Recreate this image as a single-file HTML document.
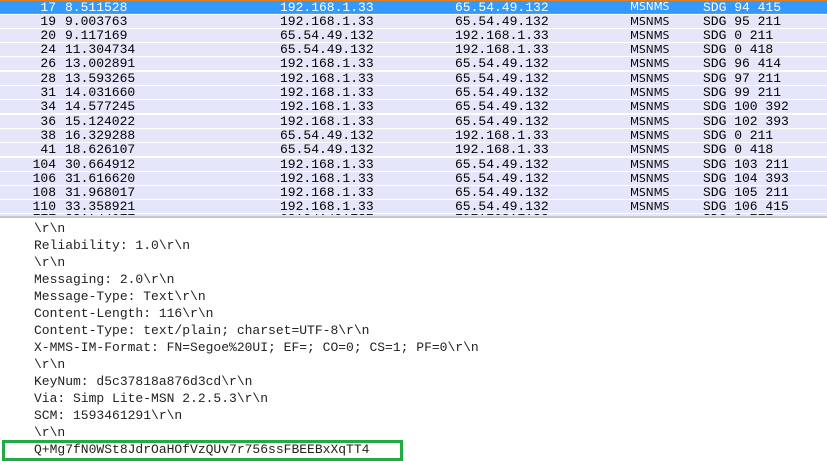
<!DOCTYPE html><html><head><style>
body{margin:0;width:827px;height:461px;overflow:hidden;background:#fff;position:relative;font-family:"Liberation Mono",monospace;font-size:13px;color:#000}
.r{position:absolute;left:0;width:827px;height:13px;background:#e6e6fa;border-bottom:1px solid #fff;line-height:14px;overflow:hidden}
.r span{position:absolute;top:0;white-space:pre}
.n{right:771px;text-align:right}
.t{left:65px}.s{left:280px}.d{left:455px}
.p{left:630px;font-family:"DejaVu Sans",sans-serif;font-size:10.5px}
.i{left:703px}
.sel{background:#3399ff;color:#fff;border-top:1px solid #e08020;border-bottom:1px solid #e08020;height:12px;line-height:13px}
.sep{position:absolute;left:0;top:216px;width:827px;height:2px;background:#c8c8c8}
.tx{position:absolute;left:34px;white-space:pre;color:#222;font-size:13px;line-height:17px}
.box{position:absolute;left:2px;top:440px;width:395px;height:15px;border:3px solid #22aa44}
</style></head><body>
<div class="r sel" style="top:0"><span class="n">17</span><span class="t">8.511528</span><span class="s">192.168.1.33</span><span class="d">65.54.49.132</span><span class="p">MSNMS</span><span class="i">SDG 94 415</span></div>
<div class="r" style="top:15px"><span class="n">19</span><span class="t">9.003763</span><span class="s">192.168.1.33</span><span class="d">65.54.49.132</span><span class="p">MSNMS</span><span class="i">SDG 95 211</span></div>
<div class="r" style="top:29px"><span class="n">20</span><span class="t">9.117169</span><span class="s">65.54.49.132</span><span class="d">192.168.1.33</span><span class="p">MSNMS</span><span class="i">SDG 0 211</span></div>
<div class="r" style="top:43px"><span class="n">24</span><span class="t">11.304734</span><span class="s">65.54.49.132</span><span class="d">192.168.1.33</span><span class="p">MSNMS</span><span class="i">SDG 0 418</span></div>
<div class="r" style="top:57px"><span class="n">26</span><span class="t">13.002891</span><span class="s">192.168.1.33</span><span class="d">65.54.49.132</span><span class="p">MSNMS</span><span class="i">SDG 96 414</span></div>
<div class="r" style="top:72px"><span class="n">28</span><span class="t">13.593265</span><span class="s">192.168.1.33</span><span class="d">65.54.49.132</span><span class="p">MSNMS</span><span class="i">SDG 97 211</span></div>
<div class="r" style="top:86px"><span class="n">31</span><span class="t">14.031660</span><span class="s">192.168.1.33</span><span class="d">65.54.49.132</span><span class="p">MSNMS</span><span class="i">SDG 99 211</span></div>
<div class="r" style="top:100px"><span class="n">34</span><span class="t">14.577245</span><span class="s">192.168.1.33</span><span class="d">65.54.49.132</span><span class="p">MSNMS</span><span class="i">SDG 100 392</span></div>
<div class="r" style="top:115px"><span class="n">36</span><span class="t">15.124022</span><span class="s">192.168.1.33</span><span class="d">65.54.49.132</span><span class="p">MSNMS</span><span class="i">SDG 102 393</span></div>
<div class="r" style="top:129px"><span class="n">38</span><span class="t">16.329288</span><span class="s">65.54.49.132</span><span class="d">192.168.1.33</span><span class="p">MSNMS</span><span class="i">SDG 0 211</span></div>
<div class="r" style="top:143px"><span class="n">41</span><span class="t">18.626107</span><span class="s">65.54.49.132</span><span class="d">192.168.1.33</span><span class="p">MSNMS</span><span class="i">SDG 0 418</span></div>
<div class="r" style="top:158px"><span class="n">104</span><span class="t">30.664912</span><span class="s">192.168.1.33</span><span class="d">65.54.49.132</span><span class="p">MSNMS</span><span class="i">SDG 103 211</span></div>
<div class="r" style="top:172px"><span class="n">106</span><span class="t">31.616620</span><span class="s">192.168.1.33</span><span class="d">65.54.49.132</span><span class="p">MSNMS</span><span class="i">SDG 104 393</span></div>
<div class="r" style="top:186px"><span class="n">108</span><span class="t">31.968017</span><span class="s">192.168.1.33</span><span class="d">65.54.49.132</span><span class="p">MSNMS</span><span class="i">SDG 105 211</span></div>
<div class="r" style="top:200px"><span class="n">110</span><span class="t">33.358921</span><span class="s">192.168.1.33</span><span class="d">65.54.49.132</span><span class="p">MSNMS</span><span class="i">SDG 106 415</span></div>
<div class="r" style="top:214px;height:2px;border:none"><span class="n" style="top:-9px">111</span><span class="t" style="top:-9px">33.744011</span><span class="s" style="top:-9px">65.54.49.132</span><span class="d" style="top:-9px">192.168.1.33</span><span class="i" style="top:-9px">SDG 0 211</span></div>
<div class="sep"></div>
<div class="tx" style="top:220px">\r\n
Reliability: 1.0\r\n
\r\n
Messaging: 2.0\r\n
Message-Type: Text\r\n
Content-Length: 116\r\n
Content-Type: text/plain; charset=UTF-8\r\n
X-MMS-IM-Format: FN=Segoe%20UI; EF=; CO=0; CS=1; PF=0\r\n
\r\n
KeyNum: d5c37818a876d3cd\r\n
Via: Simp Lite-MSN 2.2.5.3\r\n
SCM: 1593461291\r\n
\r\n
Q+Mg7fN0WSt8JdrOaHOfVzQUv7r756ssFBEEBxXqTT4</div>
<div class="box"></div>
</body></html>
